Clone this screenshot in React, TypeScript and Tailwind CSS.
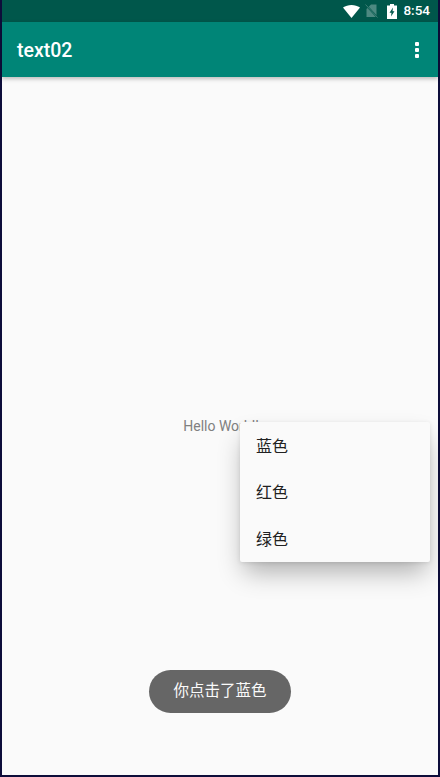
const MenuItem = ({ label }: { label: string }) => (
  <div className="h-[46.5px] pl-4 pt-[1px] flex items-center text-[16px] text-[#212121]">{label}</div>
);

const App: React.FC = () => {
  return (
    <div className="w-[440px] h-[777px] bg-[#0d0d3a] pl-[2px] pr-[2px] pb-[2px] overflow-hidden font-['Roboto','Noto_Sans_CJK_SC',sans-serif]">
      <div className="relative h-full flex flex-col bg-[#fafafa]">
        {/* status bar */}
        <div className="h-[22px] bg-[#00574b] flex items-center justify-end pr-[8px] text-white">
          <svg width="17" height="13" viewBox="0 0 17 13" className="mr-[5px]">
            <path d="M0 2.600C2.400 .9 5.400 0 8.500 0s6.100 .9 8.500 2.600L8.500 13z" fill="#fff" />
          </svg>
          <svg width="13" height="14" viewBox="0 0 13 14" className="mr-[9px]">
            <path d="M1.500 13V5l4.500-4.500h5.500V13z" fill="#fff" fillOpacity="0.3" />
            <path d="M0.500 0.500l12 13" stroke="#00574b" strokeWidth="1.800" />
            <path d="M0.500 0.500l12 13" stroke="#fff" strokeOpacity="0.35" strokeWidth="0.700" />
          </svg>
          <svg width="10" height="15" viewBox="0 0 10 15" className="mr-[6px]">
            <path d="M3 0h4v1.500h3V15H0V1.500h3z" fill="#fff" />
            <path d="M6 3.500L2.500 8.800h2L4 12.500l3.500-5.300h-2z" fill="#00574b" />
          </svg>
          <span className="text-[13.5px] font-medium leading-none">8:54</span>
        </div>
        {/* app bar */}
        <div className="h-[55px] bg-[#008577] flex items-center justify-between pl-[15px] pr-[19px] text-white shadow-[0_2px_4px_rgba(0,0,0,0.25)] z-10">
          <span className="text-[19.5px] font-medium relative top-[1px]">text02</span>
          <div className="flex flex-col gap-[2px]">
            <span className="w-[4px] h-[4px] bg-white rounded-[1px]" />
            <span className="w-[4px] h-[4px] bg-white rounded-[1px]" />
            <span className="w-[4px] h-[4px] bg-white rounded-[1px]" />
          </div>
        </div>
        {/* content */}
        <div className="flex-1 flex items-center justify-center">
          <span className="text-[14px] text-[#808080] relative left-[1px]">Hello World!</span>
        </div>
        {/* popup menu */}
        <div className="absolute left-[238px] top-[422px] w-[190px] h-[140px] bg-[#fafafa] py-[1px] rounded-[2px] shadow-[0_14px_24px_-4px_rgba(0,0,0,0.3),0_1px_4px_rgba(0,0,0,0.1)]">
          <MenuItem label="蓝色" />
          <MenuItem label="红色" />
          <MenuItem label="绿色" />
        </div>
        {/* toast */}
        <div className="absolute left-[147px] top-[670px] w-[142px] h-[43px] rounded-full bg-[#666666] flex items-center justify-center text-[15.5px] text-[#fafafa]">
          你点击了蓝色
        </div>
      </div>
    </div>
  );
};

export default App;
